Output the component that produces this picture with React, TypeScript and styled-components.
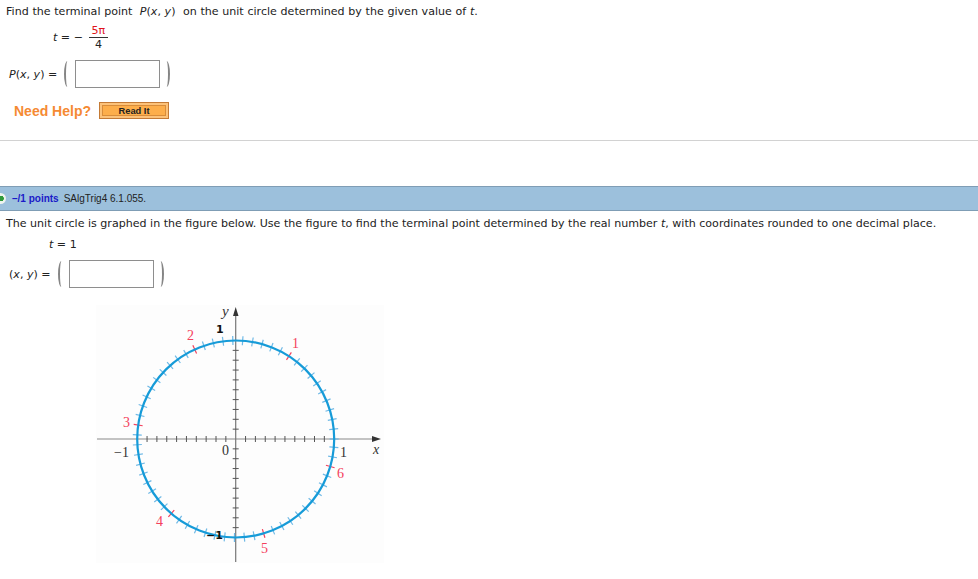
import styled, { createGlobalStyle } from 'styled-components';

const GlobalStyle = createGlobalStyle`
    html, body {
        margin: 0;
        padding: 0;
        background: #fff;
    }
    body {
        font-family: "DejaVu Sans", Verdana, sans-serif;
        font-size: 11.07px;
        color: #222;
    }
`;

const Page = styled.div`
    width: 978px;
    height: 579px;
    overflow: hidden;
`;
const Question = styled.section`
    height: 141px;
    box-sizing: border-box;
    padding: 5px 0 0 6px;
    border-bottom: 1px solid #d2d2d2;
`;
const Prompt = styled.div<{ $spread?: number }>`
    line-height: 13px;
    white-space: nowrap;
    word-spacing: ${(p) => p.$spread ?? 0}px;
`;
const Var = styled.i`
    font-style: oblique;
`;
const MathRow = styled.div<{ $indent: number; $top: number }>`
    display: flex;
    align-items: center;
    gap: 4px;
    margin-left: ${(p) => p.$indent}px;
    margin-top: ${(p) => p.$top}px;
    white-space: nowrap;
`;
const Fraction = styled.span`
    display: inline-flex;
    flex-direction: column;
    align-items: center;
    margin-left: 2px;
    line-height: 13px;
`;
const Numerator = styled.span`
    color: #e0141c;
    width: 19px;
    box-sizing: border-box;
    border-bottom: 1px solid #333;
    text-align: center;
`;
const Paren = styled.span<{ $side: 'left' | 'right' }>`
    display: block;
    flex: none;
    width: 7px;
    height: 26px;
    box-sizing: border-box;
    margin-left: ${(p) => (p.$side === 'left' ? 3 : -1)}px;
    border-radius: 50%;
    border-left: ${(p) => (p.$side === 'left' ? '2px solid #858585' : '0')};
    border-right: ${(p) => (p.$side === 'right' ? '2px solid #858585' : '0')};
`;
const AnswerBox = styled.input`
    width: 85px;
    height: 28px;
    box-sizing: border-box;
    border: 1px solid #8e8e8e;
    background: #fff;
    padding: 0;
    margin: 0;
`;
const HelpRow = styled.div`
    display: flex;
    align-items: center;
    gap: 8px;
    margin: 14px 0 0 8px;
`;
const HelpLabel = styled.span`
    font-family: "Liberation Sans", Arial, sans-serif;
    font-size: 14px;
    font-weight: bold;
    color: #f58a33;
`;
const ReadButton = styled.button`
    width: 70px;
    height: 17px;
    padding: 0;
    box-sizing: border-box;
    border: 1px solid #c47a35;
    box-shadow: inset 0 0 0 2px #fcc27a, inset 0 0 0 3px #d98d3a;
    background: #fdae4b;
    color: #222;
    font-family: "Liberation Sans", Arial, sans-serif;
    font-size: 9.3px;
    font-weight: bold;
    line-height: 14px;
`;
const PointsBar = styled.header`
    display: flex;
    align-items: center;
    height: 25px;
    box-sizing: border-box;
    margin-top: 45px;
    background: #9cc0dc;
    border-top: 1px solid #7f9db5;
    border-bottom: 1px solid #7f9db5;
    font-family: "Liberation Sans", Arial, sans-serif;
    font-size: 10px;
    overflow: hidden;
`;
const ExpandDot = styled.span`
    width: 11px;
    height: 11px;
    flex: none;
    margin-left: -5px;
    margin-right: 6px;
    border-radius: 50%;
    background: radial-gradient(circle at 55% 50%, #2f9a3a 0 2.5px, #eef3ee 3px);
`;
const Points = styled.span`
    color: #1a1ac8;
    font-weight: bold;
    margin-right: 5px;
`;
const Body = styled.div`
    padding: 6px 0 0 6px;
`;
const Figure = styled.svg`
    display: block;
    margin: 17px 0 0 90px;
    overflow: visible;
`;

const CX = 139.7;
const CY = 134;
const R = 98.5;
const UNIT = 9.85;

// circle ticks every 0.1 radian, the whole numbers are red
const circleTicks: { t: number; red: boolean }[] = [];
for (let i = 0; i < 63; i++) {
    circleTicks.push({ t: i / 10, red: i > 0 && i % 10 === 0 });
}
const axisSteps = [-9, -8, -7, -6, -5, -4, -3, -2, -1, 1, 2, 3, 4, 5, 6, 7, 8, 9];

function Graph() {
    const red = '#f4405c';
    const serif = '"Liberation Serif", "Times New Roman", serif';
    return (
        <Figure width={288} height={258} viewBox="0 0 288 258">
            <rect width={288} height={258} fill="#fdfdfd" />
            {/* axes */}
            <line x1={1} y1={CY} x2={278} y2={CY} stroke="#8a8a8a" strokeWidth={1.2} />
            <line x1={CX} y1={8} x2={CX} y2={257} stroke="#777" strokeWidth={1.2} />
            <polygon points="276,131 285,134 276,137" fill="#333" />
            <polygon points="137,11 139.7,2 142.5,11" fill="#333" />
            {axisSteps.map((s) => (
                <g key={s} stroke="#555" strokeWidth={1}>
                    <line x1={CX + s * UNIT} y1={CY - 3} x2={CX + s * UNIT} y2={CY + 3} />
                    <line x1={CX - 3} y1={CY + s * UNIT} x2={CX + 3} y2={CY + s * UNIT} />
                </g>
            ))}
            {/* circle */}
            {circleTicks.map(({ t, red: isRed }) => {
                const c = Math.cos(t);
                const s = Math.sin(t);
                return (
                    <line
                        key={t}
                        x1={CX + (R - 4.5) * c}
                        y1={CY - (R - 4.5) * s}
                        x2={CX + (R + 4.5) * c}
                        y2={CY - (R + 4.5) * s}
                        stroke={isRed ? red : '#6fb9e6'}
                        strokeWidth={1.2}
                    />
                );
            })}
            <circle cx={CX} cy={CY} r={R} fill="none" stroke="#169bd8" strokeWidth={2.2} />
            {/* labels */}
            <g fontFamily={serif} fontSize={14} fill={red}>
                <text x={196} y={43}>1</text>
                <text x={91} y={35}>2</text>
                <text x={27} y={122}>3</text>
                <text x={60} y={221}>4</text>
                <text x={165} y={248}>5</text>
                <text x={241} y={173}>6</text>
            </g>
            <g fontFamily={serif} fontSize={14} fill="#333">
                <text x={18} y={152}>−1</text>
                <text x={126} y={150}>0</text>
                <text x={244} y={152}>1</text>
                <text x={277} y={149} fontStyle="italic">x</text>
                <text x={126} y={11} fontStyle="italic" fontSize={15}>y</text>
            </g>
            <g fontFamily='"DejaVu Sans", sans-serif' fontSize={11} fontWeight="bold" fill="#111">
                <text x={120} y={28}>1</text>
                <text x={110} y={234}>−1</text>
            </g>
        </Figure>
    );
}

export default function App() {
    return (
        <Page>
            <GlobalStyle />
            <Question>
                <Prompt $spread={0.2}>
                    Find the terminal point&nbsp; <Var>P</Var>(<Var>x</Var>, <Var>y</Var>)&nbsp; on the unit circle determined by the given value of <Var>t</Var>.
                </Prompt>
                <MathRow $indent={47} $top={6}>
                    <span><Var>t</Var> = −</span>
                    <Fraction>
                        <Numerator>5π</Numerator>
                        <span>4</span>
                    </Fraction>
                </MathRow>
                <MathRow $indent={3} $top={9}>
                    <span><Var>P</Var>(<Var>x</Var>, <Var>y</Var>) =</span>
                    <Paren $side="left" />
                    <AnswerBox />
                    <Paren $side="right" />
                </MathRow>
                <HelpRow>
                    <HelpLabel>Need Help?</HelpLabel>
                    <ReadButton>Read It</ReadButton>
                </HelpRow>
            </Question>
            <PointsBar>
                <ExpandDot />
                <Points>–/1 points</Points>
                <span>SAlgTrig4 6.1.055.</span>
            </PointsBar>
            <Body>
                <Prompt>
                    The unit circle is graphed in the figure below. Use the figure to find the terminal point determined by the real number <Var>t</Var>, with coordinates rounded to one decimal place.
                </Prompt>
                <MathRow $indent={43} $top={8}>
                    <span><Var>t</Var> = 1</span>
                </MathRow>
                <MathRow $indent={3} $top={9}>
                    <span>(<Var>x</Var>, <Var>y</Var>) =</span>
                    <Paren $side="left" />
                    <AnswerBox />
                    <Paren $side="right" />
                </MathRow>
                <Graph />
            </Body>
        </Page>
    );
}
